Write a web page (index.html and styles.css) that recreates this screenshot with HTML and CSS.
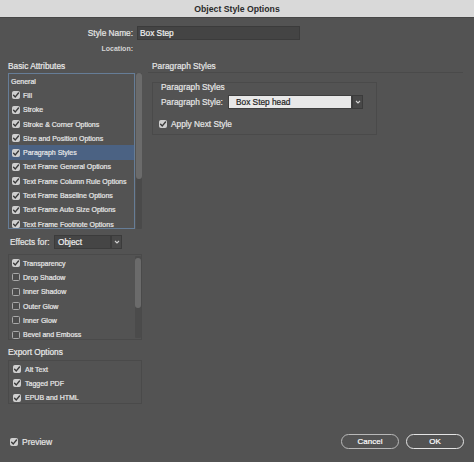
FILE: index.html
```html
<!DOCTYPE html>
<html>
<head>
<meta charset="utf-8">
<title>Object Style Options</title>
<link rel="stylesheet" href="styles.css">
</head>
<body>
<div class="win">
  <div class="titlebar">Object Style Options</div>
  <div class="content">
    <div class="name-row">
      <span class="lbl">Style Name:</span>
      <div class="text-input">Box Step</div>
    </div>
    <div class="loc-row"><span class="lbl loc">Location:</span></div>

    <div class="main">
      <div class="left">
        <div class="sect-title">Basic Attributes</div>
        <div class="list-wrap">
          <div class="list blue">
            <div class="row plain">General</div>
            <div class="row"><span class="cb on"><svg viewBox="0 0 8 8"><polyline points="1.6,4.2 3.3,5.9 6.5,2"/></svg></span>Fill</div>
            <div class="row"><span class="cb on"><svg viewBox="0 0 8 8"><polyline points="1.6,4.2 3.3,5.9 6.5,2"/></svg></span>Stroke</div>
            <div class="row"><span class="cb on"><svg viewBox="0 0 8 8"><polyline points="1.6,4.2 3.3,5.9 6.5,2"/></svg></span>Stroke &amp; Corner Options</div>
            <div class="row"><span class="cb on"><svg viewBox="0 0 8 8"><polyline points="1.6,4.2 3.3,5.9 6.5,2"/></svg></span>Size and Position Options</div>
            <div class="row sel"><span class="cb on"><svg viewBox="0 0 8 8"><polyline points="1.6,4.2 3.3,5.9 6.5,2"/></svg></span>Paragraph Styles</div>
            <div class="row"><span class="cb on"><svg viewBox="0 0 8 8"><polyline points="1.6,4.2 3.3,5.9 6.5,2"/></svg></span>Text Frame General Options</div>
            <div class="row"><span class="cb on"><svg viewBox="0 0 8 8"><polyline points="1.6,4.2 3.3,5.9 6.5,2"/></svg></span>Text Frame Column Rule Options</div>
            <div class="row"><span class="cb on"><svg viewBox="0 0 8 8"><polyline points="1.6,4.2 3.3,5.9 6.5,2"/></svg></span>Text Frame Baseline Options</div>
            <div class="row"><span class="cb on"><svg viewBox="0 0 8 8"><polyline points="1.6,4.2 3.3,5.9 6.5,2"/></svg></span>Text Frame Auto Size Options</div>
            <div class="row"><span class="cb on"><svg viewBox="0 0 8 8"><polyline points="1.6,4.2 3.3,5.9 6.5,2"/></svg></span>Text Frame Footnote Options</div>
          </div>
          <div class="scroll basic"><div class="thumb"></div></div>
        </div>

        <div class="effects-row">
          <span class="eff-lbl">Effects for:</span>
          <div class="dd dark"><span class="dd-val">Object</span></div>
          <div class="dd-btn"><svg viewBox="0 0 6 4"><polyline points="1,1 3,3 5,1"/></svg></div>
        </div>

        <div class="box effects">
          <div class="list">
            <div class="row"><span class="cb on"><svg viewBox="0 0 8 8"><polyline points="1.6,4.2 3.3,5.9 6.5,2"/></svg></span>Transparency</div>
            <div class="row"><span class="cb"></span>Drop Shadow</div>
            <div class="row"><span class="cb"></span>Inner Shadow</div>
            <div class="row"><span class="cb"></span>Outer Glow</div>
            <div class="row"><span class="cb"></span>Inner Glow</div>
            <div class="row"><span class="cb"></span>Bevel and Emboss</div>
          </div>
          <div class="scroll eff"><div class="thumb"></div></div>
        </div>

        <div class="sect-title export-title">Export Options</div>
        <div class="box export">
          <div class="row"><span class="cb on"><svg viewBox="0 0 8 8"><polyline points="1.6,4.2 3.3,5.9 6.5,2"/></svg></span>Alt Text</div>
          <div class="row"><span class="cb on"><svg viewBox="0 0 8 8"><polyline points="1.6,4.2 3.3,5.9 6.5,2"/></svg></span>Tagged PDF</div>
          <div class="row"><span class="cb on"><svg viewBox="0 0 8 8"><polyline points="1.6,4.2 3.3,5.9 6.5,2"/></svg></span>EPUB and HTML</div>
        </div>
      </div>

      <div class="right">
        <div class="panel-title">Paragraph Styles</div>
        <div class="group">
          <div class="group-title">Paragraph Styles</div>
          <div class="ps-row">
            <span class="ps-lbl">Paragraph Style:</span>
            <div class="dd light"><span class="dd-val">Box Step head</span></div>
            <div class="dd-btn"><svg viewBox="0 0 6 4"><polyline points="1,1 3,3 5,1"/></svg></div>
          </div>
          <div class="apply-row"><span class="cb on"><svg viewBox="0 0 8 8"><polyline points="1.6,4.2 3.3,5.9 6.5,2"/></svg></span>Apply Next Style</div>
        </div>
      </div>
    </div>

    <div class="footer">
      <div class="preview"><span class="cb on"><svg viewBox="0 0 8 8"><polyline points="1.6,4.2 3.3,5.9 6.5,2"/></svg></span>Preview</div>
      <div class="buttons">
        <div class="btn">Cancel</div>
        <div class="btn default">OK</div>
      </div>
    </div>
  </div>
</div>
</body>
</html>
```

FILE: styles.css
```css
* { box-sizing: border-box; }
html, body { margin: 0; padding: 0; }
body {
  width: 474px;
  height: 462px;
  overflow: hidden;
  background: #535353;
  font-family: "Liberation Sans", Arial, sans-serif;
  color: #e6e6e6;
  -webkit-text-stroke: 0.2px currentColor;
}
.win { width: 474px; height: 462px; background: #535353; }

.titlebar {
  height: 18px;
  line-height: 18px;
  background: #d9d9d9;
  color: #2a2a2a;
  font-weight: bold;
  font-size: 8.7px;
  text-align: center;
  border-bottom: 1px solid #464646;
  -webkit-text-stroke: 0;
}

.content { padding: 8px 11px 0 8px; }

.name-row { display: flex; align-items: center; height: 14px; }
.lbl { width: 125px; text-align: right; font-size: 8.3px; }
.text-input {
  margin-left: 4px;
  width: 163px;
  height: 14px;
  background: #444444;
  border: 1px solid #3b3b3b;
  color: #f2f2f2;
  font-size: 8.3px;
  line-height: 12px;
  padding-left: 2px;
}
.loc-row { margin-top: 4px; height: 10px; line-height: 10px; display: flex; }
.lbl.loc { font-size: 7px; font-weight: bold; color: #d4d4d4; -webkit-text-stroke: 0; }

.main { display: flex; margin-top: 7px; }
.left { width: 134px; }

.sect-title { height: 12px; line-height: 10px; font-size: 8.3px; color: #eaeaea; }

.list-wrap { display: flex; height: 156px; gap: 1px; }
.list.blue {
  width: 127px;
  height: 156px;
  overflow: hidden;
  border: 1px solid #667d97;
}
.row {
  height: 14.3px;
  display: flex;
  align-items: center;
  font-size: 7px;
  padding-left: 3px;
  white-space: nowrap;
  color: #e8e8e8;
}
.row.plain { padding-left: 2px; }
.row.sel { background: #4b6283; }

.cb {
  width: 8px;
  height: 8px;
  flex: none;
  margin-right: 3px;
  border: 1px solid #a9a9a9;
  border-radius: 1.5px;
  background: #4d4d4d;
  display: inline-flex;
}
.cb.on { background: #cfcfcf; border-color: #cfcfcf; }
.cb svg { width: 8px; height: 8px; margin: -1px; }
.cb polyline { fill: none; stroke: #3a3a3a; stroke-width: 1.4; stroke-linecap: round; stroke-linejoin: round; }

.scroll { width: 6px; background: #4a4a4a; border-radius: 1px; }
.scroll .thumb { background: #6b6b6b; border-radius: 3px; width: 6px; }
.scroll.basic { height: 156px; }
.scroll.basic .thumb { height: 106px; }

.effects-row { display: flex; align-items: center; margin-top: 6px; height: 14px; padding-left: 2px; }
.eff-lbl { width: 44px; font-size: 8.3px; }
.dd { height: 14px; border: 1px solid #3b3b3b; display: flex; align-items: center; padding-left: 3px; font-size: 8.3px; }
.dd.dark { width: 57px; background: #454545; color: #f0f0f0; }
.dd-btn {
  width: 11px;
  height: 14px;
  background: #484848;
  border: 1px solid #3b3b3b;
  display: flex;
  align-items: center;
  justify-content: center;
}
.dd-btn svg { width: 6px; height: 4px; }
.dd-btn polyline { fill: none; stroke: #d0d0d0; stroke-width: 1.1; }

.box { border: 1px solid #4a4a4a; width: 134px; }
.box.effects { margin-top: 5px; height: 86px; display: flex; }
.box.effects .list { width: 126px; height: 84px; overflow: hidden; padding-top: 1px; }
.scroll.eff { height: 82px; margin-top: 1px; background: #4b4b4b; }
.scroll.eff .thumb { height: 50px; margin-top: 2px; }

.export-title { margin-top: 7px; }
.box.export { margin-top: 1px; height: 44px; padding-top: 1px; }
.box.export .row { padding-left: 4px; }
.box.export .row .cb { margin-right: 4px; }

.right { margin-left: 6px; width: 315px; }
.panel-title {
  height: 12px;
  line-height: 10px;
  padding-left: 4px;
  font-size: 8.3px;
  border-bottom: 1px solid #4a4a4a;
}
.group {
  margin: 9px 0 0 4px;
  width: 225px;
  height: 53px;
  border: 1px solid #4a4a4a;
  padding-left: 8px;
}
.group-title { height: 10px; line-height: 8px; font-size: 8.3px; }
.ps-row { display: flex; align-items: center; margin-top: 2px; height: 14px; }
.ps-lbl { width: 67px; font-size: 8.3px; }
.dd.light { width: 124px; background: #e8e8e8; color: #222222; border-color: #3f3f3f; padding-left: 7px; }
.apply-row { display: flex; align-items: center; margin-top: 9px; height: 11px; font-size: 8.3px; margin-left: -2px; }
.apply-row .cb { margin-right: 4px; }

.footer { display: flex; align-items: center; justify-content: space-between; margin-top: 30px; height: 15px; margin-right: -1px; }
.preview { display: flex; align-items: center; font-size: 8.5px; padding-left: 2px; }
.preview .cb { margin-right: 4px; }
.buttons { display: flex; gap: 7px; }
.btn {
  width: 58px;
  height: 15px;
  border: 1px solid #b8b8b8;
  border-radius: 8px;
  background: #535353;
  color: #ffffff;
  font-size: 8px;
  display: flex;
  align-items: center;
  justify-content: center;
}
.btn.default { border: 1.5px solid #e4e4e4; }
```
